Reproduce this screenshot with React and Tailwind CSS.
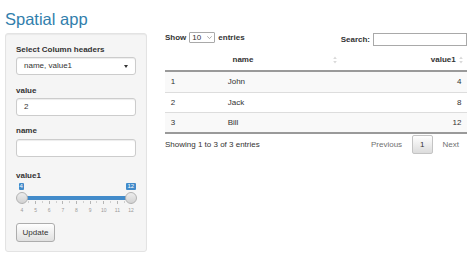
import React from "react";

function SortIcon() {
  return (
    <svg width="4" height="8" viewBox="0 0 4 8" className="shrink-0">
      <path d="M2 0.5 L3.8 3 L0.2 3 Z" fill="#d9d9d9" />
      <path d="M0.2 5 L3.8 5 L2 7.5 Z" fill="#d9d9d9" />
    </svg>
  );
}

function Slider() {
  const ticks = [4, 5, 6, 7, 8, 9, 10, 11, 12];
  const x0 = 6;
  const step = 109 / 8;
  return (
    <div className="relative w-full h-[34px]">
      {ticks.map((t, i) => (
        <div
          key={"t" + t}
          className="absolute top-[20px] w-px h-[3px] bg-[#b5b5b5]"
          style={{ left: x0 + i * step - 0.5 }}
        />
      ))}
      {ticks.slice(0, 8).map((t, i) => (
        <div
          key={"m" + t}
          className="absolute top-[20px] w-px h-[2px] bg-[#cfcfcf]"
          style={{ left: x0 + (i + 0.5) * step - 0.5 }}
        />
      ))}
      {ticks.map((t, i) => (
        <div
          key={"n" + t}
          className="absolute top-[26px] w-[10px] text-center text-[5px] leading-[6px] text-[#9a9a9a]"
          style={{ left: x0 + i * step - 5 }}
        >
          {t}
        </div>
      ))}
      <div className="absolute left-[6px] top-[15px] w-[109px] h-[4px] bg-[#428bca]" />
      <div className="absolute left-0 top-[11px] w-[12px] h-[12px] rounded-full border border-[#b3b3b3] bg-linear-to-b from-[#ececec] to-[#d2d2d2]" />
      <div className="absolute left-[109px] top-[11px] w-[12px] h-[12px] rounded-full border border-[#b3b3b3] bg-linear-to-b from-[#ececec] to-[#d2d2d2]" />
      <div className="absolute left-[2.5px] top-[2px] h-[7.5px] px-[1px] rounded-[1px] bg-[#428bca] text-white text-[6px] leading-[7.5px]">
        4
      </div>
      <div className="absolute left-[110px] top-[2px] h-[7.5px] px-[1.5px] rounded-[1px] bg-[#428bca] text-white text-[6px] leading-[7.5px]">
        12
      </div>
    </div>
  );
}

export default function App() {
  const rows = [
    ["1", "John", "4"],
    ["2", "Jack", "8"],
    ["3", "Bill", "12"],
  ];
  return (
    <div className="w-[474px] h-[260px] bg-white overflow-hidden text-[#333] text-[8px] font-['Liberation_Sans','Arial',sans-serif]">
      <div className="px-[5px] pt-[11px]">
        <h2 className="text-[16.5px] leading-[16.5px] text-[#317eac] font-normal">Spatial app</h2>
        <div className="flex items-start mt-[5.5px]">
          {/* Sidebar */}
          <div className="w-[142px] shrink-0 bg-[#f5f5f5] border border-[#e3e3e3] rounded-[3px] px-[10px] pt-[10px] pb-[9px] shadow-[inset_0_1px_1px_rgba(0,0,0,0.05)]">
            <div className="h-[11px] leading-[11px] font-bold">Select Column headers</div>
            <div className="relative mt-[2px] h-[18px] border border-[#cccccc] rounded-[3px] bg-white flex items-center pl-[7px] shadow-[inset_0_1px_1px_rgba(0,0,0,0.075)]">
              name, value1
              <div className="absolute right-[7px] top-[7px] w-0 h-0 border-x-[2.5px] border-x-transparent border-t-[3px] border-t-[#333]" />
            </div>
            <div className="mt-[9.5px] h-[11px] leading-[11px] font-bold">value</div>
            <div className="mt-[2.5px] h-[18px] border border-[#cccccc] rounded-[3px] bg-white flex items-center pl-[7px] shadow-[inset_0_1px_1px_rgba(0,0,0,0.075)]">
              2
            </div>
            <div className="mt-[9px] h-[11px] leading-[11px] font-bold">name</div>
            <div className="mt-[3px] h-[18px] border border-[#cccccc] rounded-[3px] bg-white shadow-[inset_0_1px_1px_rgba(0,0,0,0.075)]" />
            <div className="mt-[12.5px] h-[11px] leading-[11px] font-bold">value1</div>
            <Slider />
            <button className="mt-[8.5px] h-[19px] w-[39px] border border-[#adadad] rounded-[3px] bg-linear-to-b from-white to-[#e0e0e0] text-[8px] text-[#333] flex items-center justify-center">
              Update
            </button>
          </div>

          {/* Main */}
          <div className="ml-[18px] w-[302px] -mt-[3px]">
            <div className="flex justify-between items-start h-[16px]">
              <div className="flex items-center mt-[2px] h-[11px] font-bold">
                <span>Show</span>
                <div className="ml-[3px] w-[26px] h-[11px] border border-[#a9a9a9] rounded-[1px] bg-white flex items-center justify-between pl-[2px] pr-[2px] font-normal">
                  <span>10</span>
                  <svg width="5" height="3" viewBox="0 0 5 3">
                    <path d="M0.3 0.3 L2.5 2.6 L4.7 0.3" fill="none" stroke="#8a8a8a" strokeWidth="0.7" />
                  </svg>
                </div>
                <span className="ml-[3px]">entries</span>
              </div>
              <div className="flex items-center mt-[3.3px] font-bold">
                <span>Search:</span>
                <div className="ml-[3px] w-[94px] h-[12.5px] border border-[#a9a9a9] bg-white" />
              </div>
            </div>

            <div className="mt-[3.5px]">
              <div className="grid grid-cols-[57px_119px_126px] h-[22.5px] border-b-2 border-[#9a9a9a] font-bold">
                <div />
                <div className="flex items-center justify-between pl-[10.5px] pr-[4px]">
                  <span>name</span>
                  <SortIcon />
                </div>
                <div className="flex items-center justify-end pr-[4px]">
                  <span>value1</span>
                  <span className="ml-[3.3px] flex">
                    <SortIcon />
                  </span>
                </div>
              </div>
              <div className="border-b-2 border-[#9a9a9a]">
                {rows.map((r, i) => (
                  <div
                    key={r[0]}
                    className={
                      "grid grid-cols-[57px_119px_126px] h-[20px] items-center " +
                      (i % 2 === 0 ? "bg-[#f9f9f9] " : "bg-white ") +
                      (i > 0 ? "border-t border-[#dddddd]" : "")
                    }
                  >
                    <div className="pl-[5.7px]">{r[0]}</div>
                    <div className="pl-[5.7px]">{r[1]}</div>
                    <div className="text-right pr-[5.5px]">{r[2]}</div>
                  </div>
                ))}
              </div>
            </div>

            <div className="flex justify-between items-center mt-[1px] h-[19px]">
              <span>Showing 1 to 3 of 3 entries</span>
              <div className="flex items-center h-[19px]">
                <span className="px-[8px] text-[#707070]">Previous</span>
                <span className="ml-[2px] h-[19px] px-[7px] flex items-center border border-[#c4c4c4] rounded-[2px] bg-linear-to-b from-white to-[#dcdcdc]">
                  1
                </span>
                <span className="ml-[2px] px-[8px] text-[#707070]">Next</span>
              </div>
            </div>
          </div>
        </div>
      </div>
    </div>
  );
}
